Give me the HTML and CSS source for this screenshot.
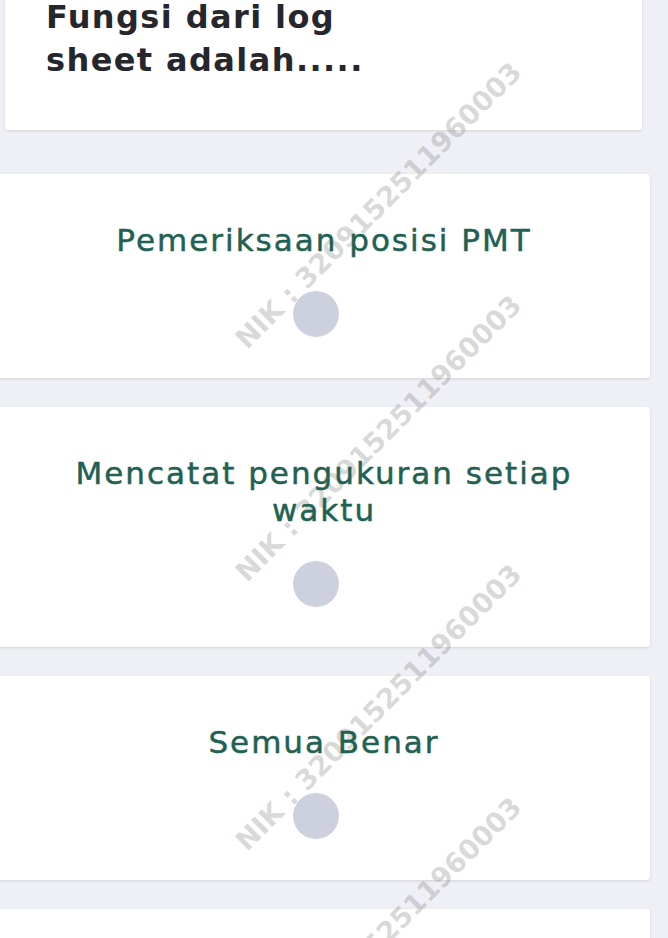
FILE: index.html
```html
<!DOCTYPE html>
<html lang="id">
<head>
<meta charset="utf-8">
<title>Soal</title>
<link rel="stylesheet" href="styles.css">
</head>
<body>
<main class="page">
  <section class="question-card">
    <h1 class="question-text">Fungsi dari log<br>sheet adalah.....</h1>
  </section>
  <div class="options">
    <div class="option-card">
      <span class="wm">NIK : 3209152511960003</span>
      <p class="option-text">Pemeriksaan posisi PMT</p>
      <span class="radio"></span>
    </div>
    <div class="option-card">
      <span class="wm">NIK : 3209152511960003</span>
      <p class="option-text">Mencatat pengukuran setiap waktu</p>
      <span class="radio"></span>
    </div>
    <div class="option-card">
      <span class="wm">NIK : 3209152511960003</span>
      <p class="option-text">Semua Benar</p>
      <span class="radio"></span>
    </div>
    <div class="option-card">
      <span class="wm">NIK : 3209152511960003</span>
      <p class="option-text">&nbsp;</p>
      <span class="radio"></span>
    </div>
  </div>
</main>
</body>
</html>
```

FILE: styles.css
```css
html, body {
  margin: 0;
  padding: 0;
  background: #efeff6;
  overflow: hidden;
}
.page {
  width: 668px;
  height: 938px;
  overflow: hidden;
}
.question-card {
  margin: -44px 26px 0 5px;
  padding: 40px 40px 48px 41px;
  background: #ffffff;
  border-radius: 3px;
  box-shadow: 0 1px 3px rgba(0, 0, 0, 0.12);
}
.question-text {
  margin: 0;
  font-family: "DejaVu Sans", "Liberation Sans", sans-serif;
  font-weight: 700;
  font-size: 32px;
  line-height: 43px;
  letter-spacing: 1.4px;
  color: #25272c;
}
.options {
  margin: 44px 0 0 -18px;
  width: 668px;
  display: flex;
  flex-direction: column;
  gap: 29px;
}
.option-card {
  position: relative;
  background: #ffffff;
  border-radius: 3px;
  box-shadow: 0 1px 3px rgba(0, 0, 0, 0.12);
  padding: 48px 40px 40.6px 56px;
  display: flex;
  flex-direction: column;
  align-items: center;
}
.option-text {
  position: relative;
  z-index: 2;
  margin: 0;
  font-family: "DejaVu Sans", "Liberation Sans", sans-serif;
  font-weight: 400;
  font-size: 31px;
  line-height: 37px;
  letter-spacing: 2px;
  color: #1f6152;
  text-align: center;
  -webkit-text-stroke: 0.5px #1f6152;
}
.radio {
  position: relative;
  z-index: 2;
  margin: 32px 16px 0 0;
  width: 46px;
  height: 46px;
  border-radius: 50%;
  background: #cdd1de;
}
.wm {
  position: absolute;
  z-index: 1;
  left: 396px;
  top: 31px;
  transform: translate(-50%, -50%) rotate(-45deg);
  white-space: nowrap;
  font-family: "DejaVu Sans", "Liberation Sans", sans-serif;
  font-weight: 700;
  font-size: 27.5px;
  color: rgba(120, 120, 120, 0.28);
  pointer-events: none;
}
```
